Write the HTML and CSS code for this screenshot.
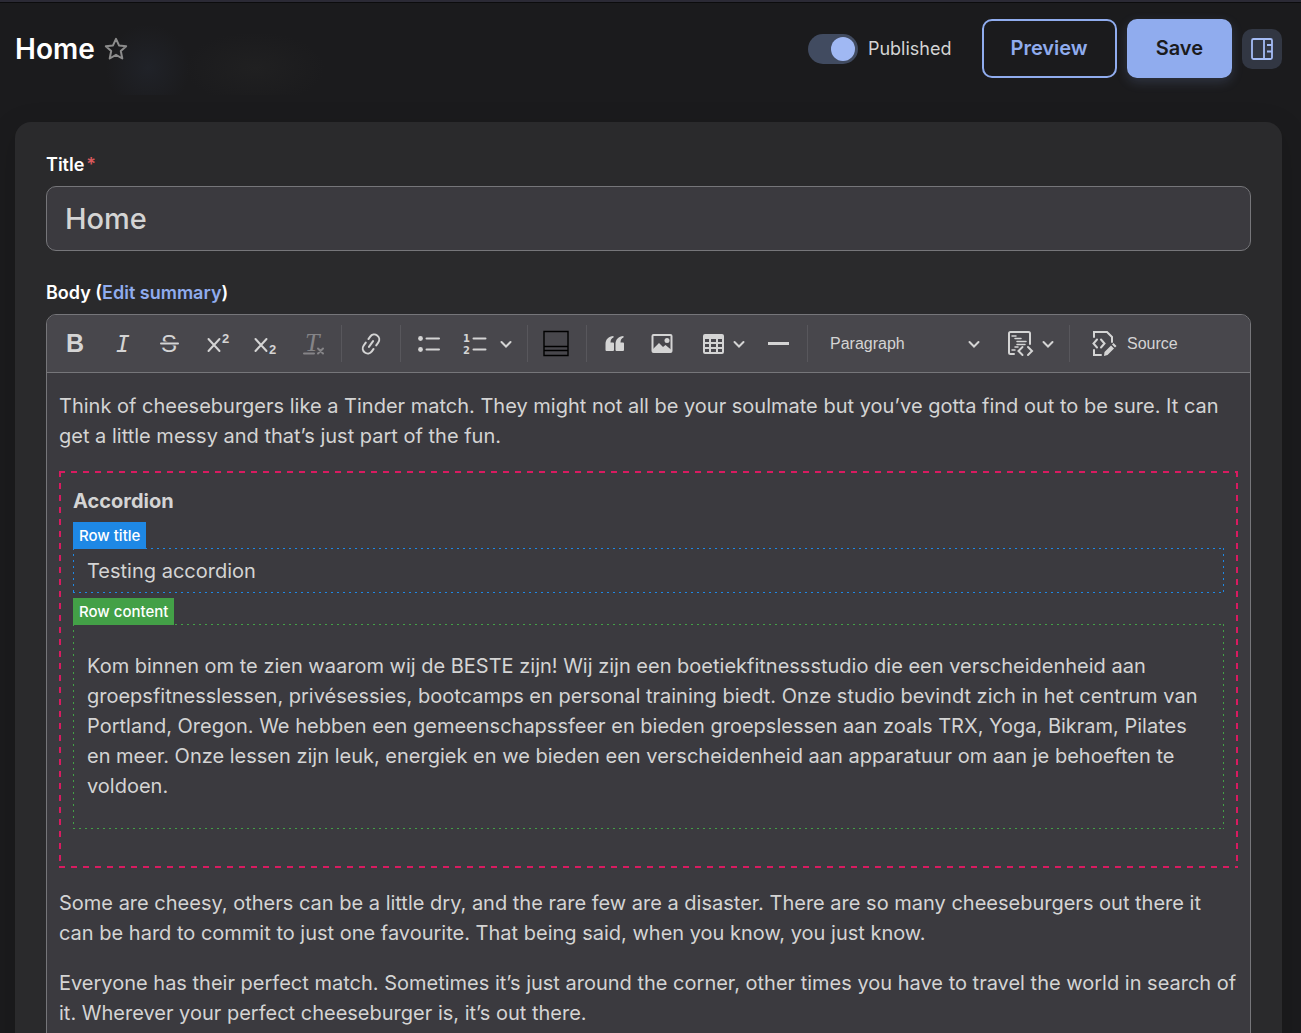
FILE: index.html
```html
<!DOCTYPE html>
<html lang="en">
<head>
    <meta charset="UTF-8">
    <meta name="viewport" content="width=device-width, initial-scale=1.0">
    <title>Edit Home</title>
    <link rel="stylesheet" href="styles.css">
</head>
<body>
<div class="page">
    <header class="header">
        <h1>Home</h1>
        <button type="button" class="star" aria-label="Add to shortcuts">
            <svg width="24" height="24" viewBox="0 0 24 24"><path d="M12 1.800l3 6.600 7.200.8-5.400 4.800 1.500 7.500L12 17.800l-6.300 3.700 1.500-7.500L1.800 9.200l7.200-.8z" fill="none" stroke="#8c8c8c" stroke-width="2" stroke-linejoin="round"/></svg>
        </button>
        <div class="actions">
            <label class="status"><input type="checkbox" class="toggle" checked> Published</label>
            <button type="button" class="btn btn-outline">Preview</button>
            <button type="submit" class="btn btn-primary">Save</button>
            <button type="button" class="sidebar-toggle" aria-label="Toggle sidebar">
                <svg width="24" height="24" viewBox="0 0 24 24" fill="none" stroke="#a5bcf5" stroke-width="1.8"><rect x="2" y="2" width="20" height="20" rx="1.5"/><path d="M14 2v20M17 8h5M17 14.5h5"/></svg>
            </button>
        </div>
    </header>

    <main class="card">
        <label class="label" for="title">Title<span class="required">*</span></label>
        <input type="text" id="title" class="title-input" value="Home">

        <div class="label">Body (<a href="#summary">Edit summary</a>)</div>
        <div class="editor">
            <div class="toolbar" role="toolbar" aria-label="Editor toolbar">
                <button type="button" class="tool" aria-label="Bold">
                    <svg class="icon" viewBox="0 0 30 30"><text x="4" y="23" class="glyph-bold">B</text></svg>
                </button>
                <button type="button" class="tool" aria-label="Italic">
                    <svg class="icon" viewBox="0 0 30 30"><text x="7" y="23" class="glyph-italic">I</text></svg>
                </button>
                <button type="button" class="tool" aria-label="Strikethrough">
                    <svg class="icon" viewBox="0 0 30 30"><text x="5" y="23" class="glyph-strike">S</text><path d="M5 14.5h17" stroke="#48474c" stroke-width="4"/><path d="M5 14.5h17" class="line"/></svg>
                </button>
                <button type="button" class="tool" aria-label="Superscript">
                    <svg class="icon" viewBox="0 0 30 30"><path d="M5.500 10l11 12M16.500 10l-11 12" class="line"/><text x="19" y="14" class="glyph-small">2</text></svg>
                </button>
                <button type="button" class="tool" aria-label="Subscript">
                    <svg class="icon" viewBox="0 0 30 30"><path d="M5.500 10l11 12M16.500 10l-11 12" class="line"/><text x="19" y="25" class="glyph-small">2</text></svg>
                </button>
                <button type="button" class="tool" aria-label="Remove format" disabled>
                    <svg class="icon" viewBox="0 0 30 30"><text x="8" y="22" class="glyph-serif">T</text><path d="M7 24.500h10M21 19.500l5 5M26 19.500l-5 5" class="line"/></svg>
                </button>
                <span class="sep"></span>
                <button type="button" class="tool" aria-label="Link">
                    <svg class="icon" viewBox="0 0 30 30"><g class="line" transform="translate(15 15) rotate(-54)"><path d="M-2-5h-3.500a5 5 0 0 0 0 10h3M2 5h3.500a5 5 0 0 0 0-10h-3M-3.500 0h7"/></g></svg>
                </button>
                <span class="sep"></span>
                <button type="button" class="tool" aria-label="Bulleted list">
                    <svg class="icon" viewBox="0 0 30 30"><circle cx="5.500" cy="9.500" r="2.400"/><circle cx="5.500" cy="20.500" r="2.400"/><path d="M11.500 9.500h12.500M11.500 20.500h12.500" class="line"/></svg>
                </button>
                <div class="split">
                    <button type="button" class="tool" aria-label="Numbered list">
                        <svg class="icon" viewBox="0 0 30 30"><text x="0" y="13" class="glyph-num">1</text><text x="0" y="25" class="glyph-num">2</text><path d="M10.500 9.500h12M10.500 20.500h12" class="line"/></svg>
                    </button>
                    <button type="button" class="arrow" aria-label="List options">
                        <svg class="chevron" viewBox="0 0 12 12"><path d="M1.500 4L6 8.500 10.500 4" class="line"/></svg>
                    </button>
                </div>
                <span class="sep"></span>
                <button type="button" class="tool" aria-label="Accordion">
                    <svg class="icon" viewBox="0 0 30 30"><path d="M2 2.500h24v24H2zM2 17.500h24M2 21.500h24" fill="none" stroke="#000" stroke-width="1.400"/></svg>
                </button>
                <span class="sep"></span>
                <button type="button" class="tool" aria-label="Block quote">
                    <svg class="icon" viewBox="0 0 30 30"><path id="quote" d="M12.500 7v1.500c-2 .7-3 2.500-3 5h2.500q1 0 1 1V21q0 1-1 1H5.500q-1 0-1-1v-6c0-4.500 3-7.500 8-8z"/><use href="#quote" x="10"/></svg>
                </button>
                <button type="button" class="tool" aria-label="Insert image">
                    <svg class="icon" viewBox="0 0 30 30"><rect x="4.500" y="6" width="19" height="17" rx="1" class="line"/><circle cx="19" cy="11.500" r="2.500"/><path d="M5 22v-2l6-6 4 4 2.500-2 6 5v1z"/></svg>
                </button>
                <div class="split">
                    <button type="button" class="tool" aria-label="Insert table">
                        <svg class="icon" viewBox="-3 0 30 30"><path fill-rule="evenodd" d="M6 5h17q2 0 2 2v16q0 2-2 2H6q-2 0-2-2V7q0-2 2-2zM6 10h4v3H6zM12 10h5v3h-5zM19 10h4v3h-4zM6 15h4v3H6zM12 15h5v3h-5zM19 15h4v3h-4zM6 20h4v3H6zM12 20h5v3h-5zM19 20h4v3h-4z"/></svg>
                    </button>
                    <button type="button" class="arrow" aria-label="Table options">
                        <svg class="chevron" viewBox="0 0 12 12"><path d="M1.500 4L6 8.500 10.500 4" class="line"/></svg>
                    </button>
                </div>
                <button type="button" class="tool" aria-label="Horizontal line">
                    <svg class="icon" viewBox="0 0 30 30"><path d="M5 13h21v3H5z"/></svg>
                </button>
                <span class="sep"></span>
                <div class="heading">
                    <select aria-label="Heading">
                        <option>Paragraph</option>
                        <option>Heading 2</option>
                        <option>Heading 3</option>
                    </select>
                    <svg class="chevron" viewBox="0 0 12 12"><path d="M1.500 4L6 8.500 10.500 4" class="line"/></svg>
                </div>
                <div class="split">
                    <button type="button" class="tool" aria-label="Insert code block">
                        <svg class="icon" viewBox="0 0 30 30"><g class="line"><path d="M9 25H5.500q-1.500 0-1.500-1.500v-19Q4 3 5.500 3h18Q25 3 25 4.500V15"/><path d="M7 7h4M10 9.500h6M12 12.500h9M12 15.500h8M10 18h3M7 21h3" stroke-width="1.500"/><path d="M17.500 18L13.500 22l4 4M23 18l4 4-4 4"/></g></svg>
                    </button>
                    <button type="button" class="arrow" aria-label="Code block language">
                        <svg class="chevron" viewBox="0 0 12 12"><path d="M1.500 4L6 8.500 10.500 4" class="line"/></svg>
                    </button>
                </div>
                <span class="sep"></span>
                <button type="button" class="source">
                    <svg class="icon" viewBox="0 0 30 30"><g class="line"><path d="M5 8V3h13l5 5v5M5 21v5h7"/><path d="M8 10.500L4.500 14.500 8 18.500M12 10.500l3.500 4-3.500 4"/></g><path d="M15 27l.5-4 6.500-6.500 3 3L18.500 26zM23 15.500l1.500-1.500 3 3-1.500 1.500z"/></svg>
                    Source
                </button>
            </div>

            <div class="content" contenteditable="true" spellcheck="false">
                <p>Think of cheeseburgers like a Tinder match. They might not all be your soulmate but you’ve gotta find out to be sure. It can get a little messy and that’s just part of the fun.</p>
                <section class="accordion outline">
                    <h3>Accordion</h3>
                    <span class="tag tag-title">Row title</span>
                    <div class="row-title outline">Testing accordion</div>
                    <span class="tag tag-content">Row content</span>
                    <div class="row-content outline">Kom binnen om te zien waarom wij de BESTE zijn! Wij zijn een boetiekfitnessstudio die een verscheidenheid aan groepsfitnesslessen, privésessies, bootcamps en personal training biedt. Onze studio bevindt zich in het centrum van Portland, Oregon. We hebben een gemeenschapssfeer en bieden groepslessen aan zoals TRX, Yoga, Bikram, Pilates en meer. Onze lessen zijn leuk, energiek en we bieden een verscheidenheid aan apparatuur om aan je behoeften te voldoen.</div>
                </section>
                <p>Some are cheesy, others can be a little dry, and the rare few are a disaster. There are so many cheeseburgers out there it can be hard to commit to just one favourite. That being said, when you know, you just know.</p>
                <p>Everyone has their perfect match. Sometimes it’s just around the corner, other times you have to travel the world in search of it. Wherever your perfect cheeseburger is, it’s out there.</p>
            </div>
        </div>
    </main>
</div>
</body>
</html>
```

FILE: styles.css
```css
* {
    box-sizing: border-box;
}
body {
    margin: 0;
    background-color: #1b1b1d;
    color: #d4d4d4;
    font-family: Inter, "Liberation Sans", sans-serif;
    font-size: 18px;
}
button, input, select {
    font-family: inherit;
    margin: 0;
}
button {
    cursor: pointer;
}
.page {
    height: 100vh;
    overflow-y: auto;
    scrollbar-width: none;
    border-top: 2px solid #2b2a35;
    box-shadow: inset 0 1px #0c0c0d;
}

/* header */
.header {
    display: flex;
    align-items: center;
    height: 93px;
    padding: 0 19px 0 15px;
    background:
        radial-gradient(ellipse 42px 44px at 148px 66px, rgba(60, 75, 105, 0.15), transparent),
        radial-gradient(ellipse 70px 36px at 255px 66px, rgba(60, 60, 56, 0.15), transparent);
}
h1 {
    margin: 0;
    font-size: 28px;
    font-weight: 600;
    line-height: 36px;
    color: #fff;
}
.star {
    display: flex;
    margin-left: 9px;
    padding: 0;
    border: none;
    background: none;
}
.actions {
    display: flex;
    align-items: center;
    gap: 10px;
    margin-left: auto;
}
.status {
    display: flex;
    align-items: center;
    gap: 10px;
    margin-right: 20px;
}
.toggle {
    appearance: none;
    width: 50px;
    height: 30px;
    padding: 3px;
    border-radius: 15px;
    background-color: #414b60;
}
.toggle::before {
    content: "";
    display: block;
    width: 24px;
    height: 24px;
    border-radius: 50%;
    background-color: #a0b8f3;
}
.toggle:checked::before {
    margin-left: 20px;
}
.btn {
    height: 59px;
    padding: 0 27px 2px;
    border: 2px solid #90acee;
    border-radius: 10px;
    font-size: 20px;
    font-weight: 600;
}
.btn-outline {
    background: none;
    color: #90acee;
}
.btn-primary {
    background-color: #90acee;
    color: #1b1b1d;
    box-shadow: 0 4px 12px rgba(144, 172, 238, 0.18);
}
.sidebar-toggle {
    display: flex;
    align-items: center;
    justify-content: center;
    width: 40px;
    height: 40px;
    padding: 0;
    border: none;
    border-radius: 10px;
    background-color: #323743;
}

/* form card */
.card {
    margin: 27px 19px 0 15px;
    padding: 31px;
    border-radius: 16px;
    background-color: #2a2a2c;
    box-shadow: 0 8px 30px rgba(0, 0, 0, 0.15);
}
.label {
    display: block;
    margin-bottom: 10px;
    font-weight: 600;
    line-height: 23px;
    color: #fff;
}
.label a {
    color: #90acee;
    text-decoration: none;
}
.required {
    margin-left: 2px;
    color: #d8595c;
}
.title-input {
    display: block;
    width: 100%;
    height: 65px;
    margin-bottom: 30px;
    padding: 0 18px;
    border: 1px solid #76767a;
    border-radius: 10px;
    background-color: #3b3a3f;
    color: #d4d4d4;
    font-size: 29px;
    font-weight: 500;
}

/* editor */
.editor {
    border: 1px solid #76767a;
    border-radius: 10px;
    background-color: #3b3a3f;
}
.toolbar {
    display: flex;
    align-items: center;
    height: 58px;
    padding: 0 6px;
    border-bottom: 1px solid #76767a;
    border-radius: 9px 9px 0 0;
    background-color: #48474c;
    color: #d4d4d4;
}
.toolbar button {
    display: flex;
    align-items: center;
    justify-content: center;
    padding: 0;
    border: none;
    background: none;
    color: inherit;
}
.toolbar .tool {
    width: 47px;
    height: 46px;
}
.toolbar .tool:disabled {
    color: #858487;
}
.icon {
    width: 30px;
    height: 30px;
    fill: currentColor;
}
.line {
    fill: none;
    stroke: currentColor;
    stroke-width: 2;
    stroke-linecap: round;
}
.glyph-bold {
    font: bold 25px "Liberation Sans", sans-serif;
}
.glyph-italic {
    font: italic 23px "DejaVu Sans Mono", monospace;
}
.glyph-strike {
    font: 24px "Liberation Sans", sans-serif;
}
.glyph-serif {
    font: italic 26px "Liberation Serif", serif;
}
.glyph-small {
    font: bold 13px "Liberation Sans", sans-serif;
}
.glyph-num {
    font: bold 10px "DejaVu Sans", sans-serif;
}
.sep {
    width: 1px;
    height: 37px;
    margin: 0 5px 0 6px;
    background-color: #58575c;
}
.split {
    display: flex;
    margin: 0 8px 0 4px;
}
.split .tool {
    width: 42px;
}
.toolbar .arrow {
    width: 14px;
}
.chevron {
    width: 12px;
    height: 12px;
}
.heading {
    display: grid;
    align-items: center;
    width: 182px;
}
.heading select, .heading .chevron {
    grid-area: 1 / 1;
}
.heading .chevron {
    justify-self: end;
    margin-right: 15px;
    pointer-events: none;
}
.heading select {
    appearance: none;
    height: 46px;
    padding: 0 17px;
    border: none;
    background: none;
    color: inherit;
    font-family: "Liberation Sans", sans-serif;
    font-size: 16px;
}
.toolbar .source {
    gap: 8px;
    height: 46px;
    padding: 0 14px;
    font-family: "Liberation Sans", sans-serif;
    font-size: 16px;
}

/* editable content */
.content {
    padding: 18px 12px 40px;
    font-size: 20px;
    line-height: 30px;
    outline: none;
}
.content p {
    margin: 0 0 20px;
}

/* widely spaced dashes, one gradient for each side */
.outline {
    --dash: 2px;
    --step: 6px;
    --line: 1px;
    --across: repeating-linear-gradient(to right, var(--color) 0 var(--dash), transparent 0 var(--step));
    --down: repeating-linear-gradient(to bottom, var(--color) 0 var(--dash), transparent 0 var(--step));
    border: var(--line) solid transparent;
    background:
        var(--across) top / 100% var(--line) no-repeat border-box,
        var(--across) bottom / 100% var(--line) no-repeat border-box,
        var(--down) left / var(--line) 100% no-repeat border-box,
        var(--down) right / var(--line) 100% no-repeat border-box;
}
.accordion {
    --color: #d81b60;
    --dash: 6px;
    --step: 12px;
    --line: 2px;
    margin-bottom: 20px;
    padding: 13px 12px 37px;
}
.accordion h3 {
    margin: 0 0 6px;
    font-size: 20px;
    font-weight: 700;
}
.tag {
    display: block;
    width: fit-content;
    margin-bottom: -1px;
    padding: 0 6px;
    font-size: 15px;
    font-weight: 500;
    line-height: 27px;
    color: #fff;
}
.tag-title {
    background-color: #1e88e5;
}
.tag-content {
    background-color: #43a047;
}
.row-title {
    --color: #1e88e5;
    margin-bottom: 5px;
    padding: 7px 13px 6px;
}
.row-content {
    --color: #43a047;
    padding: 26px 13px 27px;
}
```
